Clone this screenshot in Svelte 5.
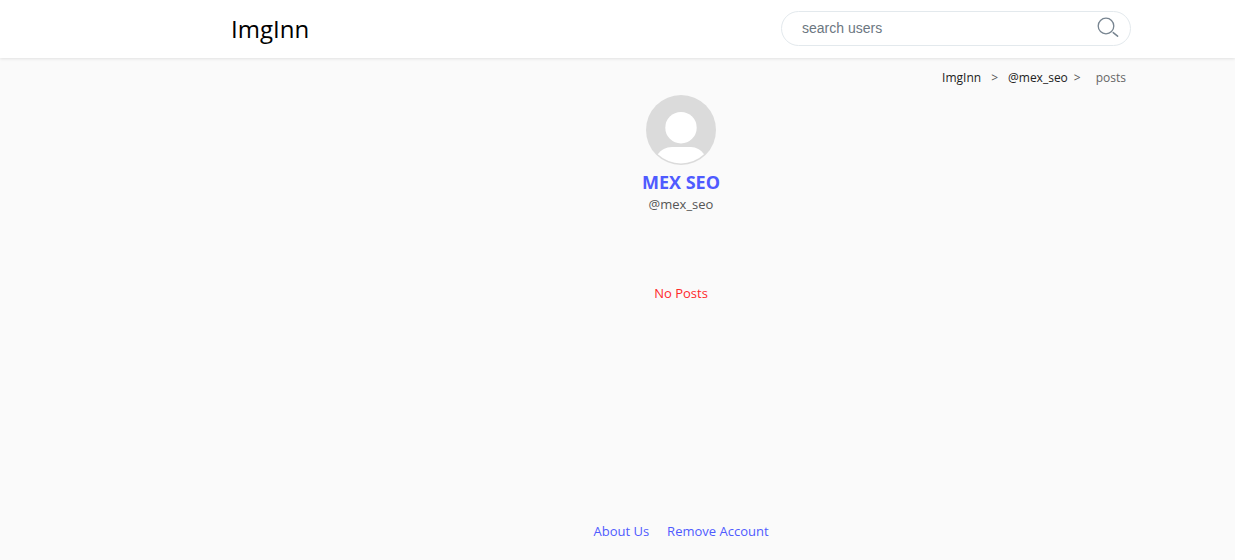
<script>
  let query = $state('');
</script>

<div class="page">
  <header>
    <div class="container bar">
      <a class="logo" href="/">ImgInn</a>
      <form role="search" onsubmit={(e) => e.preventDefault()}>
        <input type="text" aria-label="search users" placeholder="search users" bind:value={query} />
        <button type="submit" aria-label="Search">
          <svg viewBox="0 0 22 22" width="22" height="22" fill="none" stroke="#778490" stroke-linecap="round">
            <circle cx="9" cy="9" r="7.8" stroke-width="1.3" />
            <path d="M16.2 15.6 20.6 19.2" stroke-width="1.5" />
          </svg>
        </button>
      </form>
    </div>
  </header>

  <main class="container">
    <nav aria-label="Breadcrumb">
      <a href="/">ImgInn</a>
      <span>&gt;</span>
      <a href="/mex_seo/">@mex_seo</a>
      <span class="tight">&gt;</span>
      <span class="current">posts</span>
    </nav>

    <section class="profile">
      <svg class="avatar" viewBox="0 0 70 70" width="70" height="70" aria-hidden="true">
        <circle cx="35" cy="35" r="35" fill="#dbdbdb" />
        <circle cx="35" cy="32.7" r="15.7" fill="#fff" />
        <path d="M11.8 59.3C15 55 20 52 26 52H45C50 52 55 55 58 59.3A33.7 33.7 0 0 1 11.8 59.3Z" fill="#fff" />
      </svg>
      <h1>MEX SEO</h1>
      <h2>@mex_seo</h2>
    </section>

    <p class="empty">No Posts</p>
  </main>

  <footer class="container">
    <a href="/about">About Us</a>
    <a href="/remove">Remove Account</a>
  </footer>
</div>

<style>
  :global(body) {
    margin: 0;
    background: #fafafa;
  }

  .page {
    display: flex;
    flex-direction: column;
    min-height: 100vh;
    font: 13px/20px "Segoe UI", "Open Sans", sans-serif;
    color: #555;
  }

  a {
    text-decoration: none;
  }

  header {
    background: #fff;
    box-shadow: 0 1px 3px rgba(0, 0, 0, 0.1);
  }

  .container {
    box-sizing: border-box;
    width: 100%;
    max-width: 1027px;
    margin: 0 auto;
    padding-left: 127px;
  }

  .bar {
    display: flex;
    align-items: center;
    justify-content: space-between;
    height: 58px;
  }

  .logo {
    font-size: 24px;
    line-height: 32px;
    color: #000;
  }

  form {
    display: flex;
    align-items: center;
    box-sizing: border-box;
    width: 350px;
    height: 35px;
    margin-bottom: 1px;
    padding: 0 11px 2px 20px;
    border: 1px solid #e3e9ed;
    border-radius: 18px;
  }

  input {
    flex: 1;
    min-width: 0;
    padding: 0;
    border: 0;
    outline: 0;
    background: none;
    font: 14px "Liberation Sans", Arial, sans-serif;
    color: #333;
  }

  input::placeholder {
    color: #6c7781;
    opacity: 1;
  }

  button {
    display: flex;
    padding: 0;
    border: 0;
    background: none;
    cursor: pointer;
  }

  main {
    flex: 1;
  }

  nav {
    display: flex;
    justify-content: flex-end;
    padding: 10px 5px 7px 0;
    font-size: 12px;
  }

  nav a {
    color: #222;
  }

  nav span {
    margin: 0 10px;
  }

  nav .tight {
    margin: 0 6px;
  }

  nav .current {
    margin: 0 0 0 9px;
    color: #666;
  }

  .profile {
    display: flex;
    flex-direction: column;
    align-items: center;
  }

  h1 {
    margin: 5px 0 0;
    font-size: 18px;
    line-height: 24px;
    font-weight: 700;
    color: #4f5bff;
  }

  h2 {
    margin: 0;
    font-size: 13px;
    line-height: 20px;
    font-weight: 400;
  }

  .empty {
    margin: 69px 0 0;
    text-align: center;
    color: #ff2a2a;
  }

  footer {
    display: flex;
    justify-content: center;
    gap: 18px;
    padding-bottom: 19px;
  }

  footer a {
    color: #4f5bff;
  }
</style>
